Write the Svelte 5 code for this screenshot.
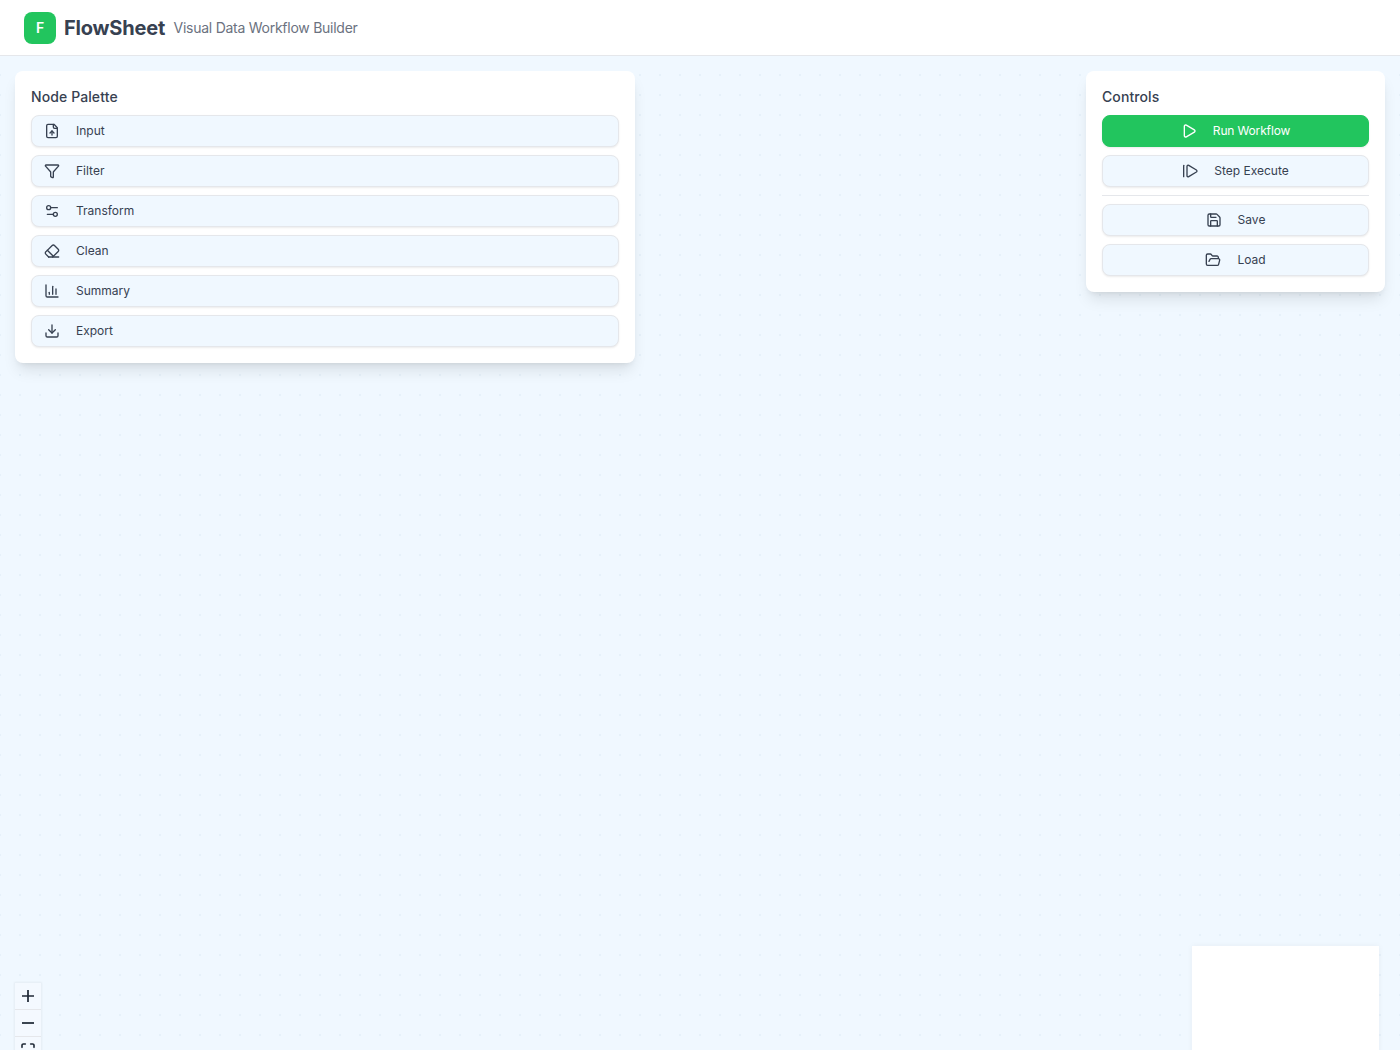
<script>
  const nodes = ['Input', 'Filter', 'Transform', 'Clean', 'Summary', 'Export'];
</script>

{#snippet icon(name)}
  <svg class="icon" viewBox="0 0 24 24" fill="none" stroke="currentColor" stroke-width="2" stroke-linecap="round" stroke-linejoin="round" aria-hidden="true">
    {#if name === 'Input'}
      <path d="M15 2H6a2 2 0 0 0-2 2v16a2 2 0 0 0 2 2h12a2 2 0 0 0 2-2V7Z" /><path d="M14 2v4a2 2 0 0 0 2 2h4" /><path d="M12 12v6" /><path d="m15 15-3-3-3 3" />
    {:else if name === 'Filter'}
      <path d="M10 20a1 1 0 0 0 .553.895l2 1A1 1 0 0 0 14 21v-7a2 2 0 0 1 .517-1.341L21.74 4.67A1 1 0 0 0 21 3H3a1 1 0 0 0-.742 1.67l7.225 7.989A2 2 0 0 1 10 14z" />
    {:else if name === 'Transform'}
      <path d="M20 7h-9" /><path d="M14 17H5" /><circle cx="17" cy="17" r="3" /><circle cx="7" cy="7" r="3" />
    {:else if name === 'Clean'}
      <path d="m7 21-4.3-4.3c-1-1-1-2.5 0-3.4l9.6-9.6c1-1 2.5-1 3.4 0l5.6 5.6c1 1 1 2.5 0 3.4L13 21" /><path d="M22 21H7" /><path d="m5 11 9 9" />
    {:else if name === 'Summary'}
      <path d="M3 3v16a2 2 0 0 0 2 2h16" /><path d="M8 17v-3" /><path d="M13 17V5" /><path d="M18 17V9" />
    {:else if name === 'Export'}
      <path d="M21 15v4a2 2 0 0 1-2 2H5a2 2 0 0 1-2-2v-4" /><polyline points="7 10 12 15 17 10" /><line x1="12" y1="15" x2="12" y2="3" />
    {:else if name === 'Run'}
      <path d="M5 5a2 2 0 0 1 3.008-1.728l11.997 6.998a2 2 0 0 1 .003 3.458l-12 7A2 2 0 0 1 5 19z" />
    {:else if name === 'Step'}
      <path d="M2.5 3.5v17" /><path d="M7.5 5a1.7 1.7 0 0 1 2.6-1.5l11.5 7a1.8 1.8 0 0 1 0 3l-11.5 7A1.7 1.7 0 0 1 7.5 19z" />
    {:else if name === 'Save'}
      <path d="M15.2 3a2 2 0 0 1 1.4.6l3.8 3.8a2 2 0 0 1 .6 1.4V19a2 2 0 0 1-2 2H5a2 2 0 0 1-2-2V5a2 2 0 0 1 2-2z" /><path d="M17 21v-7a1 1 0 0 0-1-1H8a1 1 0 0 0-1 1v7" /><path d="M7 3v4a1 1 0 0 0 1 1h7" />
    {:else if name === 'Load'}
      <path d="m6 14 1.5-2.9A2 2 0 0 1 9.24 10H20a2 2 0 0 1 1.94 2.5l-1.54 6a2 2 0 0 1-1.95 1.5H4a2 2 0 0 1-2-2V5a2 2 0 0 1 2-2h3.9a2 2 0 0 1 1.69.9l.81 1.2a2 2 0 0 0 1.67.9H18a2 2 0 0 1 2 2v2" />
    {/if}
  </svg>
{/snippet}

<div class="app">
  <header class="topbar">
    <div class="logo">F</div>
    <h1>FlowSheet</h1>
    <span class="tagline">Visual Data Workflow Builder</span>
  </header>

  <main class="canvas">
    <section class="panel palette">
      <h2>Node Palette</h2>
      <div class="stack">
        {#each nodes as node}
          <button class="btn node">
            <span class="slot">{@render icon(node)}</span>
            <span class="label">{node}</span>
          </button>
        {/each}
      </div>
    </section>

    <section class="panel controls">
      <h2>Controls</h2>
      <div class="stack">
        <button class="btn center primary">{@render icon('Run')}<span class="label">Run Workflow</span></button>
        <button class="btn center">{@render icon('Step')}<span class="label">Step Execute</span></button>
        <hr />
        <button class="btn center">{@render icon('Save')}<span class="label">Save</span></button>
        <button class="btn center">{@render icon('Load')}<span class="label">Load</span></button>
      </div>
    </section>

    <div class="zoom">
      <button aria-label="Zoom in">
        <svg viewBox="0 0 24 24" fill="none" stroke="currentColor" stroke-width="2.6" stroke-linecap="butt"><path d="M12 3v18M3 12h18" /></svg>
      </button>
      <button aria-label="Zoom out">
        <svg viewBox="0 0 24 24" fill="none" stroke="currentColor" stroke-width="2.6" stroke-linecap="butt"><path d="M3 12h18" /></svg>
      </button>
      <button aria-label="Fit view">
        <svg viewBox="0 0 24 24" fill="none" stroke="currentColor" stroke-width="2.4" stroke-linecap="round" stroke-linejoin="round"><path d="M8 3H5a2 2 0 0 0-2 2v3M21 8V5a2 2 0 0 0-2-2h-3M3 16v3a2 2 0 0 0 2 2h3M16 21h3a2 2 0 0 0 2-2v-3" /></svg>
      </button>
    </div>

    <div class="minimap"></div>
  </main>
</div>

<style>
  :global(body) {
    margin: 0;
    font-family: Inter, "Liberation Sans", sans-serif;
    color: #374151;
  }
  .app {
    display: flex;
    flex-direction: column;
    height: 100vh;
    overflow: hidden;
  }
  .topbar {
    flex: none;
    box-sizing: border-box;
    height: 56px;
    display: flex;
    align-items: center;
    padding: 0 24px;
    background: #fff;
    border-bottom: 1px solid #e5e7eb;
  }
  .logo {
    width: 32px;
    height: 32px;
    border-radius: 8px;
    background: #22c55e;
    color: #fff;
    display: grid;
    place-items: center;
    font-size: 14px;
    font-weight: 600;
  }
  h1 {
    margin: 0 0 0 8px;
    font-size: 20px;
    font-weight: 700;
    color: #374151;
    letter-spacing: -0.2px;
  }
  .tagline {
    margin-left: 8.5px;
    font-size: 14px;
    color: #6b7280;
    letter-spacing: -0.26px;
  }
  .canvas {
    flex: 1;
    position: relative;
    overflow: hidden;
    background-color: #f0f8ff;
    background-image: radial-gradient(circle, #e6f1fa 1px, transparent 1px);
    background-size: 20px 20px;
    background-position: 10px 9px;
  }
  .panel {
    position: absolute;
    top: 15px;
    box-sizing: border-box;
    padding: 16px;
    background: #fff;
    border-radius: 8px;
    box-shadow: 0 10px 15px -3px rgba(0, 0, 0, 0.1), 0 4px 6px -4px rgba(0, 0, 0, 0.1);
  }
  .palette {
    left: 15px;
    width: 620px;
  }
  .controls {
    right: 15px;
    width: 299px;
  }
  h2 {
    margin: 0 0 8px;
    font-size: 14px;
    line-height: 20px;
    font-weight: 500;
    letter-spacing: 0.1px;
    color: #374151;
  }
  .stack {
    display: flex;
    flex-direction: column;
    gap: 8px;
  }
  .btn {
    box-sizing: border-box;
    height: 32px;
    width: 100%;
    display: flex;
    align-items: center;
    padding: 0 12px;
    background: #f0f8ff;
    border: 1px solid #e5e7eb;
    border-radius: 8px;
    box-shadow: 0 1px 2px rgba(0, 0, 0, 0.08);
    font: inherit;
    font-size: 12px;
    color: #374151;
  }
  .label {
    margin-bottom: 2px;
  }
  .slot {
    width: 16px;
    display: flex;
    justify-content: center;
    margin-right: 16px;
  }
  .icon {
    width: 16px;
    height: 16px;
    flex: none;
  }
  .center {
    justify-content: center;
    gap: 16px;
  }
  .primary {
    background: #22c55e;
    border-color: #22c55e;
    color: #fff;
  }
  .primary .label {
    letter-spacing: -0.15px;
  }
  hr {
    width: 100%;
    margin: 0;
    border: 0;
    border-top: 1px solid #e5e7eb;
  }
  .zoom {
    position: absolute;
    left: 15px;
    top: 927px;
    width: 26px;
    display: flex;
    flex-direction: column;
    box-shadow: 0 0 2px 1px rgba(0, 0, 0, 0.05);
  }
  .zoom button {
    box-sizing: content-box;
    width: 16px;
    height: 16px;
    padding: 5px;
    background: #f4f9ff;
    border: 0;
    border-bottom: 1px solid #e5e7eb;
    color: #1f2937;
    display: flex;
  }
  .zoom svg {
    width: 16px;
    height: 16px;
  }
  .minimap {
    position: absolute;
    left: 1192px;
    top: 890px;
    width: 187px;
    height: 200px;
    background: #fff;
    box-shadow: 0 0 6px rgba(60, 40, 0, 0.05);
  }
</style>
